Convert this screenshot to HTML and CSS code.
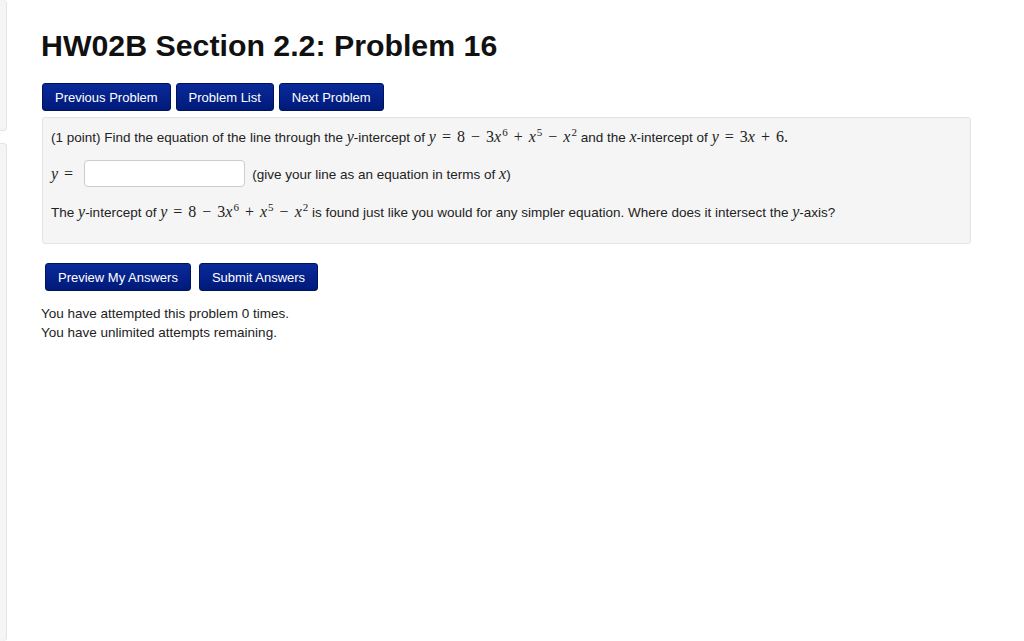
FILE: index.html
```html
<!DOCTYPE html>
<html>
<head>
    <title>HW02B Section 2.2: Problem 16</title>
    <link rel="stylesheet" href="styles.css">
</head>
<body>

    <div class="page">
        <div class="sidebar">
            <div class="well well-top"></div>
            <div class="well well-bottom"></div>
        </div>

        <div class="main">
            <h1 class="title">HW02B Section 2.2: Problem 16</h1>

            <div class="nav-buttons">
                <a class="btn">Previous Problem</a>
                <a class="btn">Problem List</a>
                <a class="btn">Next Problem</a>
            </div>

            <div class="problem">
                <p class="question">(1 point) Find the equation of the line through the <span class="m">y</span>-intercept of <span class="math"><i>y</i><span class="rel">=</span>8<span class="bin">&minus;</span>3<i>x</i><sup>6</sup><span class="bin">+</span><i>x</i><sup>5</sup><span class="bin">&minus;</span><i>x</i><sup>2</sup></span> and the <span class="m">x</span>-intercept of <span class="math"><i>y</i><span class="rel">=</span>3<i>x</i><span class="bin">+</span>6.</span></p>
                <div class="answer-row">
                    <span class="math"><i>y</i><span class="rel">=</span></span>
                    <input class="answer" type="text">
                    <span class="hint">(give your line as an equation in terms of <span class="m">x</span>)</span>
                </div>
                <p class="hint-text">The <span class="m">y</span>-intercept of <span class="math"><i>y</i><span class="rel">=</span>8<span class="bin">&minus;</span>3<i>x</i><sup>6</sup><span class="bin">+</span><i>x</i><sup>5</sup><span class="bin">&minus;</span><i>x</i><sup>2</sup></span> is found just like you would for any simpler equation. Where does it intersect the <span class="m">y</span>-axis?</p>
            </div>

            <div class="submit-buttons">
                <a class="btn btn-lg">Preview My Answers</a>
                <a class="btn btn-lg">Submit Answers</a>
            </div>

            <div class="attempts">
                You have attempted this problem 0 times.<br>
                You have unlimited attempts remaining.
            </div>
        </div>
    </div>

</body>
</html>
```

FILE: styles.css
```css
body {
    margin: 0;
    font-family: "Liberation Sans", Arial, sans-serif;
    font-size: 13.5px;
    color: #222;
    background: #fff;
}
.page {
    display: flex;
    min-height: 641px;
}
.sidebar {
    width: 7px;
    display: flex;
    flex-direction: column;
    gap: 12px;
}
.well {
    background: #f5f5f5;
    border: 1px solid #e3e3e3;
    border-left: none;
    border-radius: 0 4px 4px 0;
}
.well-top {
    height: 130px;
    border-top: none;
}
.well-bottom {
    flex-grow: 1;
    border-bottom: none;
}
.main {
    margin-left: 34px;
    width: 930px;
}
.title {
    font-size: 30.3px;
    font-weight: bold;
    color: #111;
    margin: 28px 0 19px 0;
    line-height: 36px;
}
.nav-buttons {
    display: flex;
    gap: 5px;
    margin-left: 1px;
}
.btn {
    display: inline-block;
    background: linear-gradient(#0a2a9a, #001a7a);
    color: #fff;
    font-size: 13px;
    padding: 0 12px;
    height: 28px;
    line-height: 27px;
    border: 1px solid #00125a;
    border-radius: 3px;
    box-sizing: border-box;
}
.problem {
    margin: 6px 0 0 1px;
    background: #f5f5f5;
    border: 1px solid #e3e3e3;
    border-radius: 3px;
    padding: 10px 8px;
}
.problem p {
    margin: 0;
    line-height: 18px;
}
.question {
    margin-bottom: 13px !important;
}
.hint-text {
    margin: 16px 0 11px 0 !important;
}
.m, .math {
    font-family: "Liberation Serif", "Times New Roman", serif;
    font-size: 16px;
}
.m, .math i {
    font-style: italic;
}
.rel {
    margin: 0 6px;
}
.bin {
    margin: 0 6px;
}
sup {
    font-size: 11px;
    line-height: 0;
    margin-left: 1px;
}
.answer-row {
    display: flex;
    align-items: center;
    white-space: nowrap;
}
.answer-row .rel {
    margin-right: 0;
}
.answer {
    width: 161px;
    height: 27px;
    box-sizing: border-box;
    background: #fff;
    border: 1px solid #ccc;
    border-radius: 4px;
    margin: 0 7px 0 11px;
}
.submit-buttons {
    display: flex;
    gap: 8px;
    margin: 19px 0 0 4px;
}
.attempts {
    margin-top: 13px;
    line-height: 19px;
    color: #222;
}
```
